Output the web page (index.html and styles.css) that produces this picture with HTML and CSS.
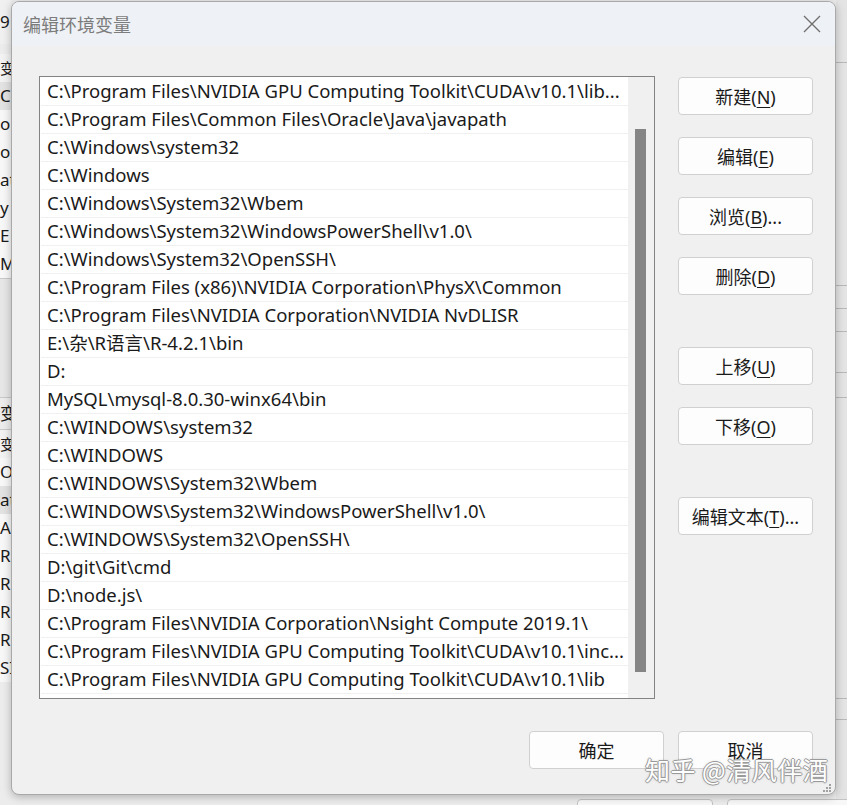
FILE: index.html
```html
<!DOCTYPE html>
<html lang="zh-CN">
<head>
  <meta charset="UTF-8">
  <link rel="stylesheet" href="styles.css">
</head>
<body>

<!-- window behind the dialog, only its edges show -->
<div class="back-window">
  <div class="back-left">
    <div class="back-title">9</div>
    <div class="back-row head">变量</div>
    <div class="back-row sel">C</div>
    <div class="back-row">on</div>
    <div class="back-row">on</div>
    <div class="back-row">at</div>
    <div class="back-row">y</div>
    <div class="back-row">E</div>
    <div class="back-row">M</div>
    <div class="back-gap"></div>
    <div class="back-row lbl">变</div>
    <div class="back-row head">变量</div>
    <div class="back-row">OS</div>
    <div class="back-row sel">at</div>
    <div class="back-row">A</div>
    <div class="back-row">R</div>
    <div class="back-row">R</div>
    <div class="back-row">R</div>
    <div class="back-row">R</div>
    <div class="back-row">SI</div>
  </div>
  <div class="back-right">
    <div class="rline" style="margin-top: 62px"></div>
    <div class="rline" style="margin-top: 222px"></div>
    <div class="rline" style="margin-top: 22px"></div>
    <div class="rline" style="margin-top: 22px"></div>
    <div class="rline" style="margin-top: 40px"></div>
    <div class="rline" style="margin-top: 24px"></div>
    <div class="rline" style="margin-top: 300px"></div>
    <div class="rline" style="margin-top: 20px"></div>
  </div>
  <div class="back-buttons">
    <span class="back-btn"></span>
    <span class="back-btn"></span>
  </div>
</div>

<div class="dialog">
  <div class="titlebar">
    <span class="title">编辑环境变量</span>
    <svg class="close" width="18" height="18" viewBox="0 0 18 18">
      <path d="M1 1 L17 17 M17 1 L1 17" stroke="#6e6e6e" stroke-width="1.3" fill="none"/>
    </svg>
  </div>

  <div class="content">
    <div class="listbox">
      <div class="rows">
        <div class="row">C:\Program Files\NVIDIA GPU Computing Toolkit\CUDA\v10.1\lib...</div>
        <div class="row">C:\Program Files\Common Files\Oracle\Java\javapath</div>
        <div class="row">C:\Windows\system32</div>
        <div class="row">C:\Windows</div>
        <div class="row">C:\Windows\System32\Wbem</div>
        <div class="row">C:\Windows\System32\WindowsPowerShell\v1.0\</div>
        <div class="row">C:\Windows\System32\OpenSSH\</div>
        <div class="row">C:\Program Files (x86)\NVIDIA Corporation\PhysX\Common</div>
        <div class="row">C:\Program Files\NVIDIA Corporation\NVIDIA NvDLISR</div>
        <div class="row">E:\杂\R语言\R-4.2.1\bin</div>
        <div class="row">D:</div>
        <div class="row">MySQL\mysql-8.0.30-winx64\bin</div>
        <div class="row">C:\WINDOWS\system32</div>
        <div class="row">C:\WINDOWS</div>
        <div class="row">C:\WINDOWS\System32\Wbem</div>
        <div class="row">C:\WINDOWS\System32\WindowsPowerShell\v1.0\</div>
        <div class="row">C:\WINDOWS\System32\OpenSSH\</div>
        <div class="row">D:\git\Git\cmd</div>
        <div class="row">D:\node.js\</div>
        <div class="row">C:\Program Files\NVIDIA Corporation\Nsight Compute 2019.1\</div>
        <div class="row">C:\Program Files\NVIDIA GPU Computing Toolkit\CUDA\v10.1\inc...</div>
        <div class="row">C:\Program Files\NVIDIA GPU Computing Toolkit\CUDA\v10.1\lib</div>
      </div>
      <div class="scrollbar">
        <div class="thumb"></div>
      </div>
    </div>

    <div class="side">
      <button class="btn">新建(<u>N</u>)</button>
      <button class="btn">编辑(<u>E</u>)</button>
      <button class="btn">浏览(<u>B</u>)...</button>
      <button class="btn">删除(<u>D</u>)</button>
      <button class="btn group">上移(<u>U</u>)</button>
      <button class="btn">下移(<u>O</u>)</button>
      <button class="btn group">编辑文本(<u>T</u>)...</button>
    </div>
  </div>

  <div class="footer">
    <button class="btn">确定</button>
    <button class="btn">取消</button>
  </div>

  <svg class="grip" width="9" height="9" viewBox="0 0 9 9">
    <rect x="7" y="1" width="2" height="2" fill="#a0a0a0"/>
    <rect x="4" y="4" width="2" height="2" fill="#a0a0a0"/>
    <rect x="7" y="4" width="2" height="2" fill="#a0a0a0"/>
    <rect x="1" y="7" width="2" height="2" fill="#a0a0a0"/>
    <rect x="4" y="7" width="2" height="2" fill="#a0a0a0"/>
    <rect x="7" y="7" width="2" height="2" fill="#a0a0a0"/>
  </svg>
</div>

<div class="watermark">知乎 @清风伴酒</div>

</body>
</html>
```

FILE: styles.css
```css
body {
  margin: 0;
  width: 847px;
  height: 805px;
  overflow: hidden;
  position: relative;
  background: #ececec;
  font-family: "Noto Sans", "Noto Sans CJK SC", sans-serif;
  color: #1a1a1a;
}

/* background window */
.back-window {
  position: relative;
  height: 805px;
}

.back-left {
  position: absolute;
  left: 0;
  top: 0;
  width: 11px;
  overflow: hidden;
  font-size: 17px;
  white-space: nowrap;
}

.back-title {
  height: 44px;
  line-height: 44px;
  margin-bottom: 10px;
  background: #f0f0f0;
}

.back-row {
  height: 28px;
  line-height: 28px;
  background: #f7f7f7;
}

.back-row.head {
  background: #f2f2f2;
  font-size: 15px;
}

.back-row.sel {
  background: #e2e2e2;
}

.back-row.lbl {
  background: #ececec;
  margin-top: 1px;
  border-bottom: 1px solid #c8c8c8;
  height: 30px;
  line-height: 30px;
}

.back-gap {
  height: 118px;
  border-top: 1px solid #c8c8c8;
  border-bottom: 1px solid #c8c8c8;
  background: #e6e6e6;
}

.back-right {
  position: absolute;
  right: 0;
  top: 0;
  width: 11px;
  height: 805px;
  background: #e4e4e4;
}

.rline {
  height: 1px;
  background: #b8b8b8;
}

.back-buttons {
  position: absolute;
  left: 577px;
  top: 799px;
  display: flex;
  gap: 14px;
}

.back-btn {
  display: block;
  width: 134px;
  height: 30px;
  border: 1px solid #c4c4c4;
  border-radius: 4px;
  background: #f8f8f8;
}

/* dialog */
.dialog {
  position: absolute;
  left: 11px;
  top: 1px;
  width: 823px;
  height: 792px;
  border: 1px solid #a9a9a9;
  border-radius: 8px;
  background: #f0f0f0;
  box-shadow: 0 2px 8px rgba(0, 0, 0, 0.25);
  overflow: hidden;
}

.titlebar {
  height: 44px;
  display: flex;
  align-items: center;
  justify-content: space-between;
  padding: 0 14px 0 11px;
  background: #eef1f5;
}

.title {
  font-size: 18px;
  color: #7c7c7c;
}

.close {
  display: block;
}

.content {
  display: flex;
  gap: 23px;
  padding: 30px 0 0 27px;
}

.listbox {
  display: flex;
  width: 614px;
  height: 621px;
  border: 1px solid #838383;
  background: #fff;
}

.rows {
  flex: 1;
  padding: 1px 0 0 1px;
}

.row {
  height: 25px;
  line-height: 25px;
  padding-bottom: 2px;
  border-bottom: 1px solid #f0f0f0;
  padding-left: 6px;
  font-size: 18.5px;
  white-space: nowrap;
  overflow: hidden;
}

.scrollbar {
  width: 26px;
  background: #f0f0f0;
  padding-top: 52px;
}

.thumb {
  width: 11px;
  height: 543px;
  margin-left: 7px;
  background: #858585;
}

.side {
  display: flex;
  flex-direction: column;
  gap: 22px;
  padding-top: 1px;
}

.btn {
  width: 135px;
  height: 38px;
  border: 1px solid #d0d0d0;
  border-radius: 4px;
  background: #fdfdfd;
  font-family: "Noto Sans", "Noto Sans CJK SC", sans-serif;
  font-size: 18px;
  color: #1a1a1a;
  padding: 0;
}

.btn u {
  text-underline-offset: 3px;
}

.side .group {
  margin-top: 30px;
}

.footer {
  display: flex;
  justify-content: flex-end;
  gap: 14px;
  padding: 32px 22px 0 0;
}

.grip {
  position: absolute;
  right: 4px;
  bottom: 2px;
}

.watermark {
  position: absolute;
  left: 645px;
  top: 751px;
  font-size: 25px;
  font-family: "Noto Sans CJK SC", sans-serif;
  color: #fff;
  letter-spacing: 0.5px;
  text-shadow: -1px 0 #9a9a9a, 1px 0 #9a9a9a, 0 -1px #9a9a9a, 0 1px #9a9a9a, 0 0 3px rgba(0, 0, 0, 0.3);
}
```
